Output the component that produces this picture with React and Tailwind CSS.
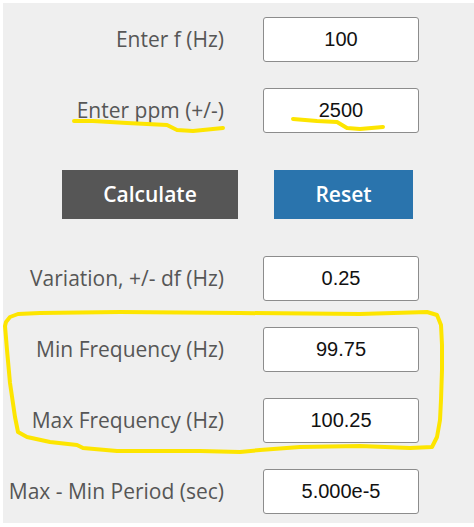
import React from 'react';

const rows1 = [
  { label: 'Enter f (Hz)', value: '100' },
  { label: 'Enter ppm (+/-)', value: '2500' },
];

const rows2 = [
  { label: 'Variation, +/- df (Hz)', value: '0.25' },
  { label: 'Min Frequency (Hz)', value: '99.75' },
  { label: 'Max Frequency (Hz)', value: '100.25' },
  { label: 'Max - Min Period (sec)', value: '5.000e-5' },
];

function Row({ label, value }) {
  return (
    <div className="flex items-center h-[45px]">
      <label className="w-[221px] text-right text-[21px] text-[#565656] font-['Open_Sans',sans-serif] leading-none whitespace-nowrap">
        {label}
      </label>
      <input
        readOnly
        value={value}
        className="ml-[39px] w-[156px] h-[45px] bg-white border border-[#8c8c8c] rounded-[3px] text-center text-[20px] text-[#111] font-['Liberation_Sans',Arial,sans-serif] outline-none"
      />
    </div>
  );
}

// hand-drawn yellow highlight marks over the form
function Marks() {
  const box = [
    [6, 322], [10, 317], [18, 314], [40, 313], [120, 312], [240, 313], [360, 314], [427, 312],
    [437, 315], [441, 325], [442, 345], [442, 370], [441, 400], [440, 420], [437, 437], [432, 447],
    [410, 448], [360, 446], [300, 447], [260, 450], [240, 452], [200, 451], [117, 451], [83, 448],
    [77, 445], [50, 442], [27, 437], [18, 432], [15, 417], [10, 383], [7, 350], [5, 326], [6, 322],
  ];
  const u1 = [[74, 121], [93, 121], [127, 123], [167, 125], [177, 130], [193, 131], [223, 128]];
  const u2 = [[293, 119], [317, 121], [337, 122], [347, 128], [360, 129], [383, 127]];
  const pts = (a) => a.map(([x, y]) => `${x},${y}`).join(' ');
  return (
    <svg className="absolute inset-0 pointer-events-none" width="474" height="527" viewBox="0 0 474 527">
      <g fill="none" stroke="#fde500" strokeWidth="4" strokeLinecap="round" strokeLinejoin="round">
        <polyline points={pts(u1)} />
        <polyline points={pts(u2)} />
        <polyline points={pts(box)} />
      </g>
    </svg>
  );
}

export default function App() {
  return (
    <div className="relative w-[474px] h-[527px] bg-white overflow-hidden">
      <div className="ml-[3px] mt-[3px] h-[520px] bg-[#efefef] pt-[14px] flex flex-col">
        <div className="flex flex-col gap-[26px]">
          {rows1.map(r => <Row key={r.label} {...r} />)}
        </div>
        <div className="flex mt-[37px] ml-[59px] gap-[36px]">
          <button className="w-[176px] h-[49px] bg-[#565656] text-white text-[21px] font-semibold font-['Open_Sans',sans-serif]">
            Calculate
          </button>
          <button className="w-[139px] h-[49px] bg-[#2a74ad] text-white text-[21px] font-semibold font-['Open_Sans',sans-serif]">
            Reset
          </button>
        </div>
        <div className="flex flex-col gap-[26px] mt-[37px]">
          {rows2.map(r => <Row key={r.label} {...r} />)}
        </div>
      </div>
      <Marks />
    </div>
  );
}
